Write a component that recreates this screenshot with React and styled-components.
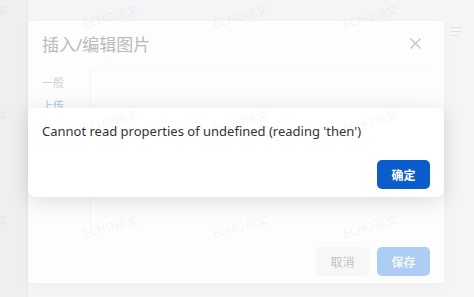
import React from 'react';
import styled, { createGlobalStyle } from 'styled-components';

const GlobalStyle = createGlobalStyle`
	html, body {
		margin: 0;
		padding: 0;
		width: 100%;
		height: 100%;
		overflow: hidden;
	}
	body {
		font-family: 'Noto Sans', 'Noto Sans CJK SC', sans-serif;
		background: #f3f3f5;
	}
`;

export default function App() {
	const marks = Array.from({ length: 12 });

	return (
		<>
			<GlobalStyle />
			<Page>
				<Backdrop>
					<SideStrip />
					<MainArea>
						<MenuLines>
							<span />
							<span />
							<span />
						</MenuLines>
					</MainArea>
				</Backdrop>

				<ImageDialog>
					<DialogHeader>
						<DialogTitle>插入/编辑图片</DialogTitle>
						<CloseBtn>
							<svg width="11" height="11" viewBox="0 0 11 11">
								<path
									d="M1 1L10 10M10 1L1 10"
									stroke="#c4c4c4"
									strokeWidth="1.4"
									strokeLinecap="round"
								/>
							</svg>
						</CloseBtn>
					</DialogHeader>
					<DialogBody>
						<TabList>
							<TabItem>一般</TabItem>
							<TabItem active>上传</TabItem>
						</TabList>
						<TabPanel />
					</DialogBody>
					<DialogFooter>
						<FooterButton>取消</FooterButton>
						<FooterButton primary>保存</FooterButton>
					</DialogFooter>
				</ImageDialog>

				<AlertCard>
					<AlertText>Cannot read properties of undefined (reading 'then')</AlertText>
					<AlertActions>
						<ConfirmButton>确定</ConfirmButton>
					</AlertActions>
				</AlertCard>

				<Watermarks>
					{marks.map((_, i) => (
						<Mark key={i}>
							<span>ECHO瑞文</span>
						</Mark>
					))}
				</Watermarks>
			</Page>
		</>
	);
}

const Page = styled.div`
	position: relative;
	width: 474px;
	height: 297px;
	overflow: hidden;
	background: #f3f3f5;
`;

const Backdrop = styled.div`
	display: flex;
	height: 100%;
`;

const SideStrip = styled.div`
	width: 27px;
	background: #efeff1;
	border-right: 1px solid #ebebed;
`;

const MainArea = styled.div`
	flex: 1;
	display: flex;
	justify-content: flex-end;
	padding: 27px 12px 0 0;
	background: #f5f5f7;
`;

const MenuLines = styled.div`
	display: flex;
	flex-direction: column;
	gap: 3px;
	width: 12px;

	span {
		height: 1px;
		background: #e2e2e2;
	}
	span:last-child {
		width: 8px;
	}
`;

const ImageDialog = styled.div`
	position: absolute;
	left: 28px;
	top: 21px;
	width: 416px;
	height: 262px;
	display: flex;
	flex-direction: column;
	background: #fdfdfd;
	box-shadow: 0 2px 10px rgba(0, 0, 0, 0.03);
`;

const DialogHeader = styled.div`
	display: flex;
	align-items: center;
	justify-content: space-between;
	height: 44px;
	padding: 0 23px 0 14px;
`;

const DialogTitle = styled.h2`
	margin: 0;
	font-size: 17px;
	font-weight: 400;
	color: #bababa;
`;

const CloseBtn = styled.div`
	display: flex;
	align-items: center;
`;

const DialogBody = styled.div`
	flex: 1;
	display: flex;
	padding: 5px 14px 0 14px;
`;

const TabList = styled.div`
	display: flex;
	flex-direction: column;
	width: 48px;
	padding-top: 5px;
	gap: 7px;
`;

const TabItem = styled.div`
	font-size: 11px;
	line-height: 16px;
	color: ${({ active }) => (active ? '#acc8ee' : '#d2d2d2')};
`;

const TabPanel = styled.div`
	flex: 1;
	height: 160px;
	border-left: 1px solid #f6f6f6;
	border-top: 1px solid #f8f8f8;
`;

const DialogFooter = styled.div`
	display: flex;
	justify-content: flex-end;
	gap: 8px;
	padding: 0 14px 7px 0;
`;

const FooterButton = styled.div`
	width: 53px;
	height: 29px;
	display: flex;
	align-items: center;
	justify-content: center;
	border-radius: 5px;
	font-size: 12px;
	font-weight: ${({ primary }) => (primary ? 700 : 400)};
	color: ${({ primary }) => (primary ? '#f4f8fe' : '#c2c2c2')};
	background: ${({ primary }) => (primary ? '#adcdf5' : '#f7f7f7')};
`;

const AlertCard = styled.div`
	position: absolute;
	left: 28px;
	top: 108px;
	width: 416px;
	height: 89px;
	box-sizing: border-box;
	padding: 13px 14px 8px 14px;
	display: flex;
	flex-direction: column;
	justify-content: space-between;
	background: #ffffff;
	border-radius: 8px;
	box-shadow: 0 4px 22px rgba(0, 0, 0, 0.13);
`;

const AlertText = styled.p`
	margin: 0;
	font-size: 13px;
	line-height: 20px;
	color: #333333;
`;

const AlertActions = styled.div`
	display: flex;
	justify-content: flex-end;
`;

const ConfirmButton = styled.div`
	width: 53px;
	height: 29px;
	display: flex;
	align-items: center;
	justify-content: center;
	border-radius: 5px;
	background: #0b5dcb;
	color: #ffffff;
	font-size: 12px;
	font-weight: 700;
`;

const Watermarks = styled.div`
	position: absolute;
	left: -85px;
	top: -37px;
	display: grid;
	grid-template-columns: repeat(4, 130px);
	grid-auto-rows: 105px;
	pointer-events: none;
`;

const Mark = styled.div`
	display: flex;
	align-items: center;
	justify-content: center;

	span {
		transform: rotate(-15deg);
		font-size: 12px;
		color: rgba(0, 0, 0, 0.06);
		white-space: nowrap;
	}
`;
